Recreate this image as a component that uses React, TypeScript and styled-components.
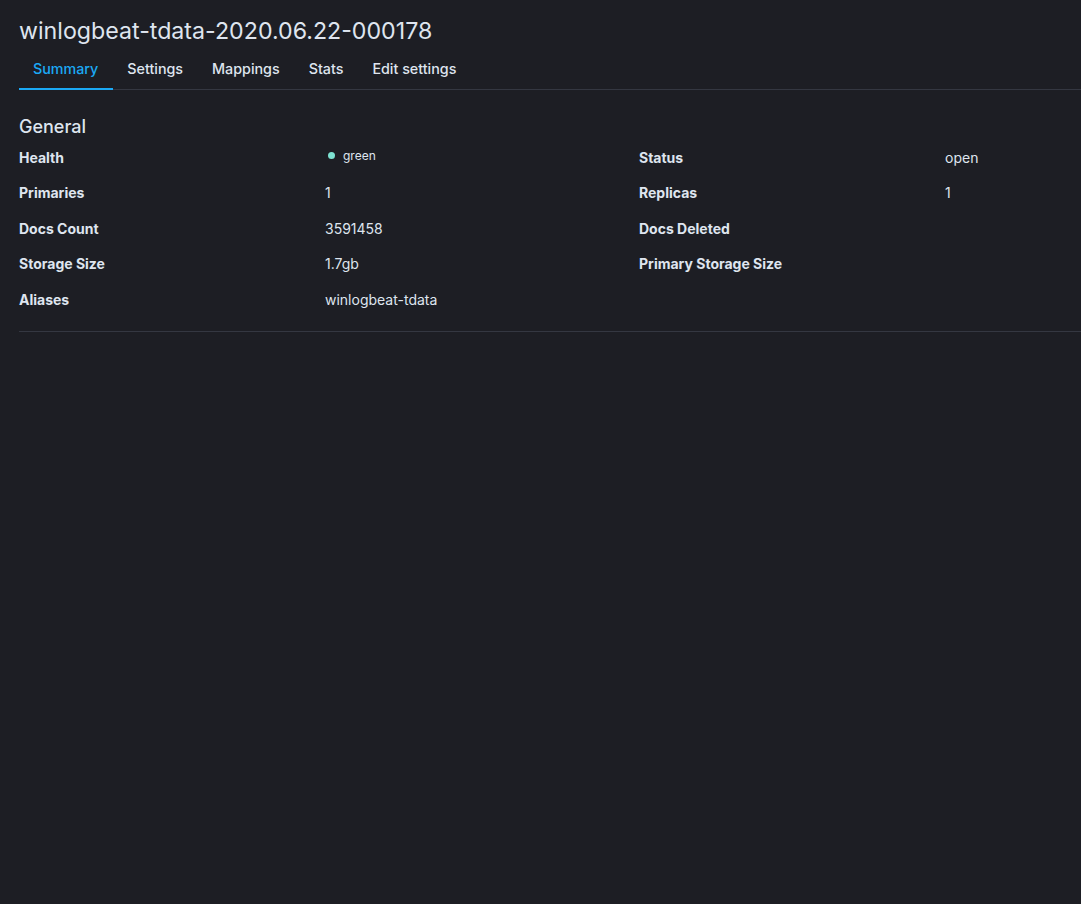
import React from "react";
import styled, { createGlobalStyle } from "styled-components";

const Global = createGlobalStyle`
  html, body { margin: 0; padding: 0; background: #1d1e24; }
  body { font-family: Inter, "Noto Sans", sans-serif; color: #dfe5ef; -webkit-font-smoothing: antialiased; }
  #root { min-height: 904px; overflow: hidden; }
`;

const Page = styled.div`
  padding: 15px 0 0 19px;
  width: 1300px;
`;

const Title = styled.h1`
  margin: 0;
  font-size: 23.2px;
  line-height: 32px;
  font-weight: 400;
  color: #dfe5ef;
`;

const Tabs = styled.div`
  display: flex;
  margin-top: 5px;
  border-bottom: 1px solid #343741;
`;

const Tab = styled.button<{ $active?: boolean }>`
  background: none;
  border: none;
  font-family: inherit;
  font-size: 14.3px;
  font-weight: 500;
  padding: 0 15px 4px 14px;
  height: 38px;
  line-height: 34px;
  cursor: pointer;
  color: ${(p) => (p.$active ? "#1ba9f5" : "#dfe5ef")};
  box-shadow: ${(p) => (p.$active ? "inset 0 -2px 0 #1ba9f5" : "none")};
  margin-bottom: -1px;
`;

const Section = styled.div`
  padding-top: 25px;
`;

const Heading = styled.h2`
  margin: 0 0 1px;
  font-size: 18px;
  line-height: 24px;
  font-weight: 500;
`;

const Grid = styled.div`
  display: grid;
  grid-template-columns: 306px 314px 306px 1fr;
  grid-auto-rows: 35.5px;
  align-items: center;
  font-size: 14px;
`;

const Label = styled.div`
  font-weight: 700;
  line-height: 20px;
`;

const Value = styled.div`
  font-weight: 400;
  line-height: 20px;
`;

const Health = styled.div`
  display: flex;
  align-items: center;
  gap: 8px;
  font-size: 12px;
  margin-top: -5px;
  padding-left: 3px;
`;

const Dot = styled.span`
  width: 7px;
  height: 7px;
  border-radius: 50%;
  background: #7de2d1;
`;

const Divider = styled.hr`
  border: none;
  border-top: 1px solid #343741;
  margin: 13.5px 0 0;
`;

export default function App() {
  const tabs = ["Summary", "Settings", "Mappings", "Stats", "Edit settings"];
  return (
    <>
      <Global />
      <Page>
        <Title>winlogbeat-tdata-2020.06.22-000178</Title>
        <Tabs>
          {tabs.map((t, i) => (
            <Tab key={t} $active={i === 0}>
              {t}
            </Tab>
          ))}
        </Tabs>
        <Section>
          <Heading>General</Heading>
          <Grid>
            <Label>Health</Label>
            <Health>
              <Dot />
              green
            </Health>
            <Label>Status</Label>
            <Value>open</Value>
            <Label>Primaries</Label>
            <Value>1</Value>
            <Label>Replicas</Label>
            <Value>1</Value>
            <Label>Docs Count</Label>
            <Value>3591458</Value>
            <Label>Docs Deleted</Label>
            <Value></Value>
            <Label>Storage Size</Label>
            <Value>1.7gb</Value>
            <Label>Primary Storage Size</Label>
            <Value></Value>
            <Label>Aliases</Label>
            <Value>winlogbeat-tdata</Value>
          </Grid>
          <Divider />
        </Section>
      </Page>
    </>
  );
}
